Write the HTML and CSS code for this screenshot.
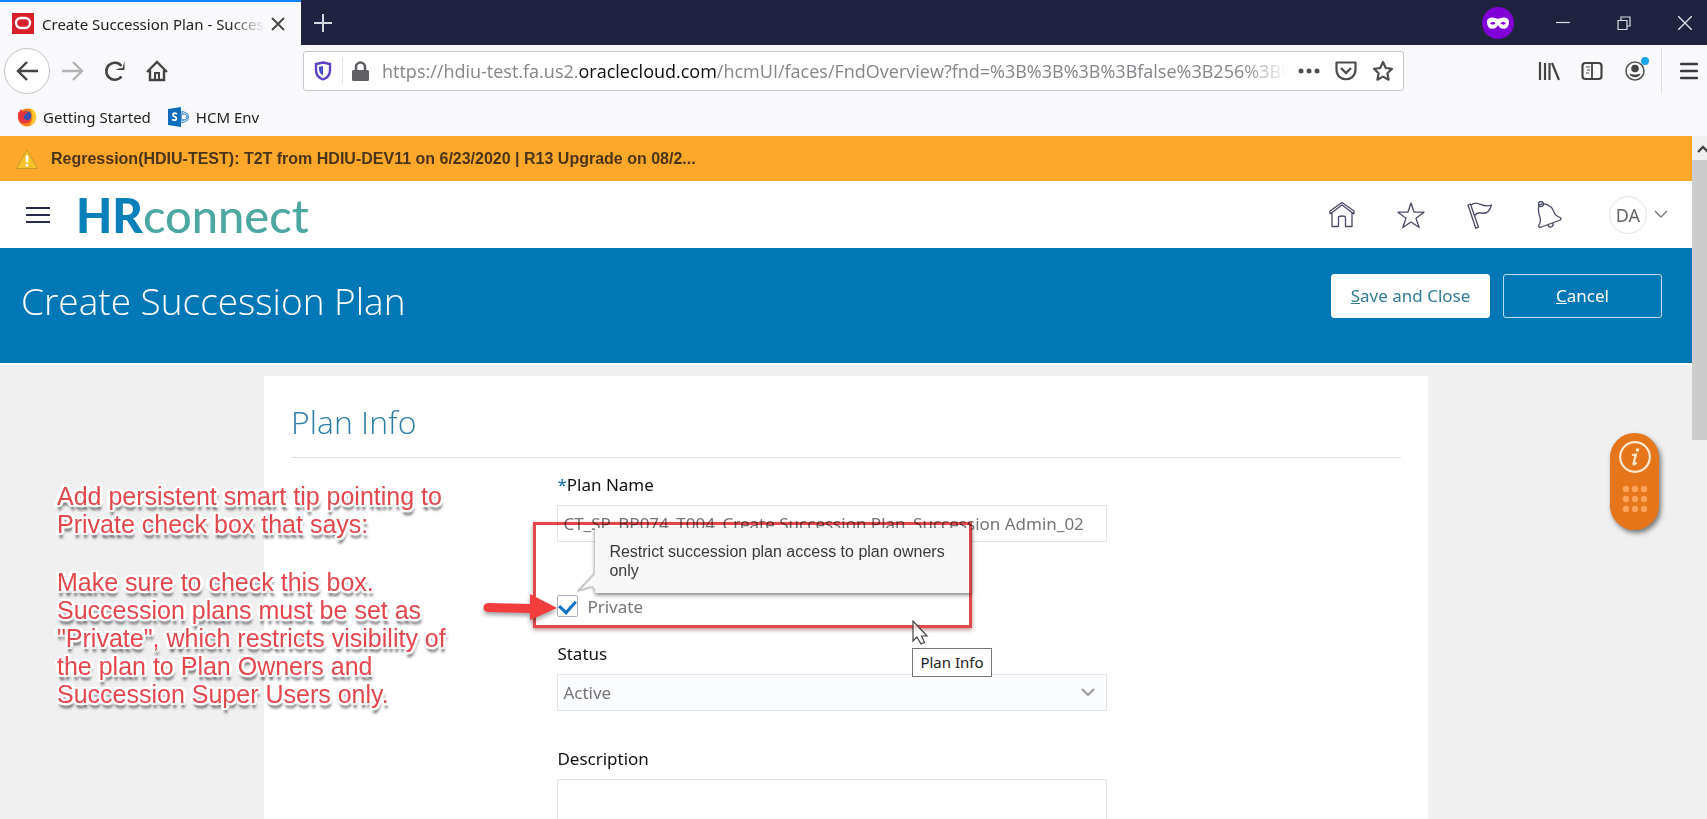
FILE: index.html
```html
<!DOCTYPE html>
<html lang="en">
<head>
<meta charset="utf-8">
<title>Create Succession Plan - Succession</title>
<link rel="stylesheet" href="styles.css">
</head>
<body>
<div class="tabbar">
  <div class="tab">
    <svg class="favicon" viewBox="0 0 22 21"><rect width="22" height="21" fill="#d8202a"/><rect x="4" y="5" width="14" height="10" rx="5" fill="none" stroke="#fff" stroke-width="2.4"/></svg>
    <span class="tab-title">Create Succession Plan - Succession</span>
    <button class="icon-btn tab-close" aria-label="Close tab"><svg width="14" height="14" viewBox="0 0 14 14"><path d="M1 1l12 12M13 1L1 13" fill="none" stroke="#444" stroke-width="1.8"/></svg></button>
  </div>
  <button class="icon-btn new-tab" aria-label="New tab"><svg width="20" height="20" viewBox="0 0 20 20"><path d="M10 1v18M1 10h18" stroke="#d5d5e2" stroke-width="2"/></svg></button>
  <div class="window-controls">
    <svg class="private-mode" width="32" height="32" viewBox="0 0 32 32"><circle cx="16" cy="16" r="16" fill="#8000d7"/><path d="M5 15c0-5 6-5 8-4 2 1 4 1 6 0 2-1 8-1 8 4 0 8-8 9-11 3-3 6-11 5-11-3z" fill="#fff"/><path d="M8 16.500c1.500-2 4-2 5.500 0-1.500 1.500-4 1.500-5.500 0zM18.500 16.500c1.500-2 4-2 5.500 0-1.500 1.500-4 1.500-5.500 0z" fill="#8000d7"/></svg>
    <button class="icon-btn" aria-label="Minimize"><svg width="14" height="14" viewBox="0 0 14 14"><path d="M0 6.500h14" stroke="#dcdce6" stroke-width="1.200"/></svg></button>
    <button class="icon-btn" aria-label="Restore"><svg width="14" height="14" viewBox="0 0 14 14"><path d="M1 4.500h9v9H1zM4 4V1h9v9h-3" fill="none" stroke="#dcdce6" stroke-width="1.200"/></svg></button>
    <button class="icon-btn" aria-label="Close window"><svg width="14" height="14" viewBox="0 0 14 14"><path d="M0 0l14 14M14 0L0 14" stroke="#dcdce6" stroke-width="1.400"/></svg></button>
  </div>
</div>

<div class="navbar">
  <div class="nav-buttons">
    <button class="icon-btn back" aria-label="Back"><svg width="24" height="24" viewBox="0 0 24 24"><path d="M23 12H3M12 3l-9 9 9 9" fill="none" stroke="#444" stroke-width="2.400"/></svg></button>
    <button class="icon-btn" aria-label="Forward"><svg width="24" height="24" viewBox="0 0 24 24"><path d="M1 12h20M12 3l9 9-9 9" fill="none" stroke="#b4b4b6" stroke-width="2.400"/></svg></button>
    <button class="icon-btn" aria-label="Reload"><svg width="24" height="24" viewBox="0 0 24 24"><path d="M18.500 17.500A8.500 8.500 0 1 1 18.500 7" fill="none" stroke="#444" stroke-width="2.600"/><path d="M21.500 2v9h-9l3-1.500 4-.5z" fill="#444"/></svg></button>
    <button class="icon-btn" aria-label="Home"><svg width="24" height="24" viewBox="0 0 24 24"><path d="M2 13L12 3l10 10M5 11v10h14V11" fill="none" stroke="#444" stroke-width="2.400"/><path d="M10 21v-7h4v7" fill="none" stroke="#444" stroke-width="2"/></svg></button>
  </div>
  <div class="urlbar">
    <svg width="18" height="20" viewBox="0 0 18 20"><path d="M9 1.500l7 1.500v6c0 5-3 8-7 9.500C5 17 2 14 2 9V3z" fill="none" stroke="#5b3fc4" stroke-width="2.400"/><path d="M9 5v9.500C6.500 13 5 11 5 8.500V5.800z" fill="#4a4fc8"/></svg>
    <span class="url-divider"></span>
    <svg width="17" height="20" viewBox="0 0 17 20"><rect y="9" width="17" height="11" rx="1.500" fill="#606064"/><path d="M4 10V6a4.500 4.500 0 0 1 9 0v4" fill="none" stroke="#606064" stroke-width="2.600"/></svg>
    <span class="url">https://hdiu-test.fa.us2.<b>oraclecloud.com</b>/hcmUI/faces/FndOverview?fnd=%3B%3B%3B%3Bfalse%3B256%3B%3B%3B</span>
    <div class="url-actions">
      <button class="icon-btn" aria-label="Page actions"><svg width="22" height="22" viewBox="0 0 22 22"><g fill="#4d4d50"><circle cx="3" cy="11" r="2.500"/><circle cx="11" cy="11" r="2.500"/><circle cx="19" cy="11" r="2.500"/></g></svg></button>
      <button class="icon-btn" aria-label="Save to Pocket"><svg width="22" height="22" viewBox="0 0 22 22"><path d="M1.500 2.500h19v7c0 13-19 13-19 0z" fill="none" stroke="#4d4d50" stroke-width="2.200" stroke-linejoin="round"/><path d="M6 8l5 5 5-5" fill="none" stroke="#4d4d50" stroke-width="2.400"/></svg></button>
      <button class="icon-btn" aria-label="Bookmark page"><svg width="22" height="22" viewBox="0 0 22 22"><path d="M11 2l2.800 6 6.200.8-4.600 4.400 1.200 6.500-5.600-3.100-5.600 3.100 1.200-6.500L2 8.800 8.200 8z" fill="none" stroke="#4d4d50" stroke-width="2.200" stroke-linejoin="round"/></svg></button>
    </div>
  </div>
  <div class="tools">
    <button class="icon-btn" aria-label="Library"><svg width="22" height="22" viewBox="0 0 22 22"><path d="M2 2v18M7 3v17M11.500 3v17M14 3l7 17" fill="none" stroke="#444" stroke-width="2.200"/></svg></button>
    <button class="icon-btn" aria-label="Sidebars"><svg width="22" height="22" viewBox="0 0 22 22"><rect x="1.500" y="3" width="19" height="16" rx="3" fill="none" stroke="#444" stroke-width="2.200"/><path d="M11 3v16" stroke="#444" stroke-width="1.800"/><path d="M5 7h4M6 10h3M5 13h3" stroke="#444"/></svg></button>
    <button class="icon-btn account" aria-label="Account"><svg width="22" height="22" viewBox="0 0 22 22"><circle cx="11" cy="11" r="9" fill="none" stroke="#555" stroke-width="1.600"/><circle cx="11" cy="8.500" r="3.800" fill="#444"/><path d="M5.500 13.500c3 1.500 8 1.500 11 0-1 5-10 5-11 0z" fill="#444"/></svg></button>
    <span class="tool-divider"></span>
    <button class="icon-btn" aria-label="Menu"><svg width="18" height="18" viewBox="0 0 18 18"><path d="M1 2h16M1 9h16M1 16h16" stroke="#3c3c3f" stroke-width="2.400" stroke-linecap="round"/></svg></button>
  </div>
</div>

<div class="bookmarks">
  <a href="#"><svg width="20" height="20" viewBox="0 0 20 20"><circle cx="10" cy="10.500" r="9" fill="#ff7a16"/><path d="M12 1c5 1 8 5 7 11-1 4-4 6-7 6 4-3 5-11 0-17z" fill="#ffc92e"/><circle cx="9.500" cy="9" r="4.800" fill="#3553b5"/><path d="M1 6c1-1 2-2 3-4l2 3c2-1 4 0 5 1-3 1-5 3-4 5 2 3 5 2 7 1-1 4-7 6-11 3C1 13 1 9 1 6z" fill="#e6353e"/></svg>Getting Started</a>
  <a href="#"><svg width="22" height="20" viewBox="0 0 22 20"><path d="M14 4l6 3v6l-6 3zM14 6l7 4-7 4" fill="none" stroke="#3f8ec8"/><circle cx="16" cy="10" r="3" fill="#fff" stroke="#3f8ec8"/><path d="M0 2l13-2v20L0 18z" fill="#0f6cbd"/><path d="M9 7C6 5 4 7 5.500 9c1 1 3 1 3 2.500C8.500 13.500 6 13.500 4 12.500" fill="none" stroke="#fff" stroke-width="1.700"/></svg>HCM Env</a>
</div>

<div class="viewport">
  <div class="page">
    <div class="notice">
      <svg width="22" height="20" viewBox="0 0 22 20"><path d="M11 1L21.500 19.500H.5z" fill="#f5c02a" stroke="#c9982c" stroke-linejoin="round"/><path d="M11 6.500v7M11 15v2.500" stroke="#fff" stroke-width="2.600"/></svg>
      <span>Regression(HDIU-TEST): T2T from HDIU-DEV11 on 6/23/2020 | R13 Upgrade on 08/2...</span>
    </div>
    <header class="app-header">
      <button class="icon-btn" aria-label="Navigator"><svg width="24" height="18" viewBox="0 0 24 18"><path d="M0 2h24M0 9h24M0 16h24" stroke="#272850" stroke-width="2"/></svg></button>
      <a class="logo" href="#"><b>HR</b>connect</a>
      <nav class="app-nav">
        <a href="#" aria-label="Home"><svg width="28" height="28" viewBox="0 0 28 28"><path d="M2 13L14 4l12 9M2 13v-3L14 1.500 26 10v3M4 12v13.500h6.500v-9c0-2 7-2 7 0v9H24V12" /></svg></a>
        <a href="#" aria-label="Favorites"><svg width="28" height="28" viewBox="0 0 28 28"><path d="M14 2l3 9 10 .2-8 6 3.200 9.300L14 21l-8.200 5.500L9 17.200l-8-6 10-.2z"/></svg></a>
        <a href="#" aria-label="Watchlist"><svg width="28" height="28" viewBox="0 0 28 28"><path d="M2 4l2.500-.8 8 23-2.700 1zM5 4c7-6 11 4 20.500 0-2 7-6 9-10 8-3-.8-5 0-7 2.500"/></svg></a>
        <a href="#" aria-label="Notifications"><svg width="28" height="28" viewBox="0 0 28 28"><path d="M4 4c6-3 12 1 14 5 2 5 3 6 8 8l-.5 2L5 26.500 3.500 25c3-5 2-7 .5-12-1-4-1-6 0-9z"/><circle cx="6" cy="3" r="2.500"/><path d="M13 24c1 4 6 2 5-2"/></svg></a>
      </nav>
      <button class="user" aria-label="DA user menu"><span class="avatar">DA</span><svg width="14" height="9" viewBox="0 0 14 9"><path d="M1 1l6 6 6-6" fill="none" stroke="#777" stroke-width="1.400"/></svg></button>
    </header>
    <div class="title-bar">
      <h1>Create Succession Plan</h1>
      <div class="actions">
        <button class="btn btn-primary"><u>S</u>ave and Close</button>
        <button class="btn"><u>C</u>ancel</button>
      </div>
    </div>
    <main class="content">
      <section class="card">
        <h2>Plan Info</h2>
        <form class="fields">
          <label class="label" for="name"><span class="req">*</span>Plan Name</label>
          <input class="control" id="name" type="text" value="CT_SP_BP074_T004_Create Succession Plan_Succession Admin_02" readonly>
          <div class="private">
            <input id="private" type="checkbox" checked>
            <label for="private">Private</label>
            <div class="callout" role="tooltip">Restrict succession plan access to plan owners only
              <svg class="callout-tail" width="19" height="20" viewBox="0 0 19 20"><path d="M19 0v16l-3-2L1 18 17 2z" fill="#f7f7f7"/><path d="M17 1L1 18l14-4 3 4" fill="none" stroke="#c9c9c9" stroke-width="2"/></svg>
            </div>
            <div class="highlight"></div>
            <svg class="arrow" width="76" height="32" viewBox="0 0 76 32"><path d="M5 11l42 1V2l27 14-27 12v-7L5 20c-6 0-6-9 0-9z" fill="#f23d3f"/></svg>
            <svg class="cursor" width="18" height="26" viewBox="0 0 18 26"><path d="M1 1v20l4-4 4 7 3.500-1.500L9.500 16H15z" fill="#fff" fill-opacity=".7" stroke="#444" stroke-width="1.200"/></svg>
            <div class="hover-tip" role="tooltip">Plan Info</div>
          </div>
          <label class="label" for="status">Status</label>
          <div class="select-wrap">
            <select class="control" id="status"><option>Active</option></select>
            <svg width="14" height="9" viewBox="0 0 14 9"><path d="M1 1l6 6 6-6" fill="none" stroke="#999" stroke-width="2"/></svg>
          </div>
          <label class="label label-desc" for="desc">Description</label>
          <textarea class="control area" id="desc"></textarea>
        </form>
      </section>
      <div class="note">
        <p>Add persistent smart tip pointing to<br>Private check box that says:</p>
        <p>Make sure to check this box.<br>Succession plans must be set as<br>"Private", which restricts visibility of<br>the plan to Plan Owners and<br>Succession Super Users only.</p>
      </div>
      <button class="help" aria-label="Help">
        <svg width="32" height="32" viewBox="0 0 32 32"><circle cx="16" cy="16" r="14.800" fill="none" stroke="#ffe9cf" stroke-width="2.200"/><circle cx="18.500" cy="9" r="1.800" fill="#ffe9cf"/><path d="M13 14l4-.5-2.500 9c-.3 1.300 1 1.200 3-1" fill="none" stroke="#ffe9cf" stroke-width="2.200"/></svg>
        <svg class="keypad" width="28" height="28" viewBox="0 0 28 28"><g fill="#ffa45c"><circle cx="5" cy="4" r="3.200"/><circle cx="14" cy="4" r="3.200"/><circle cx="23" cy="4" r="3.200"/><circle cx="5" cy="14" r="3.200"/><circle cx="14" cy="14" r="3.200"/><circle cx="23" cy="14" r="3.200"/><circle cx="5" cy="24" r="3.200"/><circle cx="14" cy="24" r="3.200"/><circle cx="23" cy="24" r="3.200"/></g></svg>
      </button>
    </main>
  </div>
  <div class="scrollbar">
    <svg width="12" height="24" viewBox="0 0 12 24"><path d="M1 16l5-5 5 5" fill="none" stroke="#444" stroke-width="2.400"/></svg>
    <div class="thumb"></div>
  </div>
</div>
</body>
</html>
```
FILE: styles.css
```css
* { box-sizing: border-box; }

body {
  margin: 0;
  height: 100vh;
  display: flex;
  flex-direction: column;
  overflow: hidden;
  font-family: "Noto Sans", "Open Sans", sans-serif;
  font-size: 17px;
  color: #222;
  background: #f9f9fb;
}

button, input, select, textarea { font: inherit; }
a { color: inherit; text-decoration: none; }
svg { flex: none; display: block; }

.icon-btn {
  display: flex;
  align-items: center;
  justify-content: center;
  padding: 0;
  border: 0;
  background: none;
}

/* Browser tabs */
.tabbar {
  display: flex;
  align-items: center;
  height: 45px;
  flex: none;
  background: #202340;
}
.tab {
  display: flex;
  align-items: center;
  align-self: stretch;
  width: 301px;
  padding: 0 16px 0 12px;
  border-top: 2px solid #0a84ff;
  background: #f9f9fb;
}
.favicon { width: 22px; height: 21px; }
.tab-title {
  flex: 1;
  margin: 0 6px 0 8px;
  overflow: hidden;
  white-space: nowrap;
  font-size: 15px;
  mask-image: linear-gradient(to right, #000 84%, transparent);
}
.new-tab { margin-left: 12px; }
.window-controls {
  display: flex;
  align-items: center;
  gap: 47px;
  margin-left: auto;
  padding-right: 15px;
}
.private-mode { margin-right: -5px; }

/* Toolbar */
.navbar {
  display: flex;
  align-items: center;
  height: 54px;
  flex: none;
  padding: 0 9px 2px 4px;
}
.nav-buttons { display: flex; align-items: center; gap: 18px; width: 299px; }
.back {
  width: 46px;
  height: 46px;
  margin-right: -7px;
  border: 1px solid #c4c4c8;
  border-radius: 50%;
  background: #fff;
}
.urlbar {
  display: flex;
  align-items: center;
  flex: 1;
  min-width: 0;
  height: 40px;
  padding: 0 9px 0 10px;
  border: 1px solid #c8c8cc;
  border-radius: 3px;
  background: #fff;
}
.url-divider { width: 1px; height: 26px; margin: 0 9px 0 10px; background: #e2e2e4; }
.url {
  flex: 1;
  min-width: 0;
  margin: 0 10px 0 13px;
  overflow: hidden;
  white-space: nowrap;
  font-family: "Open Sans", "Noto Sans", sans-serif;
  font-size: 18px;
  color: #85858a;
  mask-image: linear-gradient(to right, #000 95%, transparent);
}
.url b { font-weight: 400; color: #0c0c0d; }
.url-actions { display: flex; gap: 15px; }
.tools { display: flex; align-items: center; gap: 21px; margin-left: 134px; }
.account { position: relative; }
.account::after {
  content: "";
  position: absolute;
  top: -3px;
  right: -3px;
  width: 8px;
  height: 8px;
  border-radius: 50%;
  background: #1aa5e8;
}
.tool-divider { width: 1px; height: 46px; margin: 0 -3px 0 -6px; background: #e0e0e4; }

.bookmarks {
  display: flex;
  align-items: center;
  gap: 17px;
  height: 37px;
  flex: none;
  padding: 0 17px 1px;
  font-size: 15px;
}
.bookmarks a { display: flex; align-items: center; gap: 6px; }

/* Page */
.viewport { display: flex; flex: 1; min-height: 0; overflow: hidden; }
.page { display: flex; flex-direction: column; flex: 1; min-width: 0; }
.scrollbar { width: 15px; flex: none; background: #f0f0f0; overflow: hidden; }
.scrollbar svg { margin-left: 5px; }
.thumb { height: 280px; background: #cdcdcd; }

.notice {
  display: flex;
  align-items: center;
  gap: 13px;
  height: 45px;
  flex: none;
  padding: 0 16px;
  font-family: "Liberation Sans", Arial, sans-serif;
  font-size: 16px;
  font-weight: 700;
  color: #4a3418;
  background: #fea82b;
}

.app-header {
  display: flex;
  align-items: center;
  height: 67px;
  flex: none;
  padding: 0 24px 0 26px;
  background: #fff;
}
.logo {
  margin-left: 26px;
  font-family: Lato, sans-serif;
  font-size: 47px;
  font-weight: 500;
  line-height: 56px;
  color: #4ba79f;
}
.logo b { font-weight: 900; color: #0a80ba; }
.app-nav { display: flex; gap: 41px; margin-left: auto; }
.app-nav svg { fill: none; stroke: #4a4a66; stroke-width: 1.3; stroke-linejoin: round; }
.user {
  display: flex;
  align-items: center;
  gap: 7px;
  margin-left: 46px;
  padding: 0;
  border: 0;
  background: none;
}
.avatar {
  width: 38px;
  border: 1px solid #e4e4e4;
  border-radius: 50%;
  line-height: 36px;
  font-size: 18px;
  color: #666;
}

.title-bar {
  display: flex;
  align-items: flex-start;
  justify-content: space-between;
  height: 115px;
  flex: none;
  padding: 26px 30px 0 21px;
  background: #0277b5;
}
h1 {
  margin: 0;
  font-family: "Open Sans", "Noto Sans", sans-serif;
  font-size: 37px;
  font-weight: 300;
  line-height: 54px;
  color: #fff;
}
.actions { display: flex; gap: 13px; }
.btn {
  width: 159px;
  height: 44px;
  padding: 0 0 2px;
  border: 1px solid #b8dff2;
  border-radius: 3px;
  color: #fff;
  background: transparent;
}
.btn-primary { color: #337a99; background: #fff; border-color: #fff; }

.content {
  position: relative;
  flex: 1;
  min-height: 0;
  padding: 11px 24px 0;
  border-top: 2px solid #fff;
  background: #f0f0f0;
}
.card {
  max-width: 1164px;
  height: 100%;
  margin: 0 auto;
  padding: 21px 27px 0;
  background: #fff;
}
h2 {
  margin: 0 0 15px;
  padding-bottom: 10px;
  border-bottom: 1px solid #dcdfe2;
  font-family: "Open Sans", "Noto Sans", sans-serif;
  font-size: 32px;
  font-weight: 300;
  line-height: 50px;
  color: #2f7ea8;
}
.fields { width: 550px; margin-left: 24%; }
.label { display: block; line-height: 24px; margin-bottom: 8px; color: #111; }
.req { color: #0a6aa8; }
.control {
  display: block;
  width: 100%;
  height: 37px;
  padding: 0 5px;
  border: 1px solid #e2e4e8;
  border-radius: 0;
  color: #75757a;
  background: #fff;
  outline: 0;
}
.private {
  position: relative;
  display: flex;
  align-items: center;
  gap: 9px;
  height: 22px;
  margin: 53px 0 25px;
  color: #75757a;
}
.private input {
  appearance: none;
  width: 21px;
  height: 22px;
  margin: 0;
  border: 1px solid #a9b2c0;
  border-radius: 2px;
  background: #fff;
}
.private input:checked::before {
  content: "";
  display: block;
  width: 8px;
  height: 13px;
  margin: 1px auto 0;
  border: solid #0b72c4;
  border-width: 0 3px 3px 0;
  transform: rotate(42deg);
}
.select-wrap { position: relative; }
.select-wrap select { appearance: none; background: #fbfcff; }
.select-wrap svg { position: absolute; right: 12px; top: 14px; }
.label-desc { margin-top: 36px; }
.area { height: 100px; resize: none; }

/* Overlays around the check box */
.callout {
  position: absolute;
  left: 38px;
  top: -67px;
  width: 376px;
  height: 65px;
  padding: 14px 14px 0;
  font-family: "Liberation Sans", Arial, sans-serif;
  font-size: 16px;
  line-height: 19px;
  color: #3a3a3a;
  background: #f7f7f7;
  box-shadow: 0 2px 4px rgba(0, 0, 0, .5);
}
.callout-tail { position: absolute; left: -18px; bottom: 0; }
.highlight {
  position: absolute;
  left: -24px;
  top: -73px;
  width: 439px;
  height: 106px;
  border: 3px solid #e0484c;
  box-shadow: 0 2px 4px rgba(120, 40, 40, .5);
  mix-blend-mode: multiply;
}
.arrow { position: absolute; left: -74px; top: -3px; filter: drop-shadow(0 3px 2px rgba(0, 0, 0, .35)); }
.cursor { position: absolute; left: 355px; top: 25px; }
.hover-tip {
  position: absolute;
  z-index: 1;
  left: 355px;
  top: 53px;
  padding: 0 7px;
  border: 1px solid #777;
  font-size: 15px;
  line-height: 27px;
  white-space: nowrap;
  color: #222;
  background: #fff;
}

.note {
  position: absolute;
  left: 57px;
  top: 117px;
  font-family: "Liberation Sans", Arial, sans-serif;
  font-size: 25px;
  line-height: 28px;
  color: #e2474c;
  text-shadow: -2px -2px 1px #fff, 2px -2px 1px #fff, -2px 2px 1px #fff, 2px 2px 1px #fff,
    0 -2px 1px #fff, 0 2px 1px #fff, -3px 0 1px #fff, 3px 0 1px #fff, 1px 5px 3px rgba(0, 0, 0, .75);
}
.note p { margin: 0 0 30px; }

.help {
  position: absolute;
  right: 33px;
  top: 68px;
  display: flex;
  flex-direction: column;
  align-items: center;
  gap: 12px;
  width: 49px;
  height: 97px;
  padding: 8px 0 0;
  border: 0;
  border-radius: 25px;
  background: #e5761b;
  box-shadow: 2px 3px 5px rgba(0, 0, 0, .5);
}
```
